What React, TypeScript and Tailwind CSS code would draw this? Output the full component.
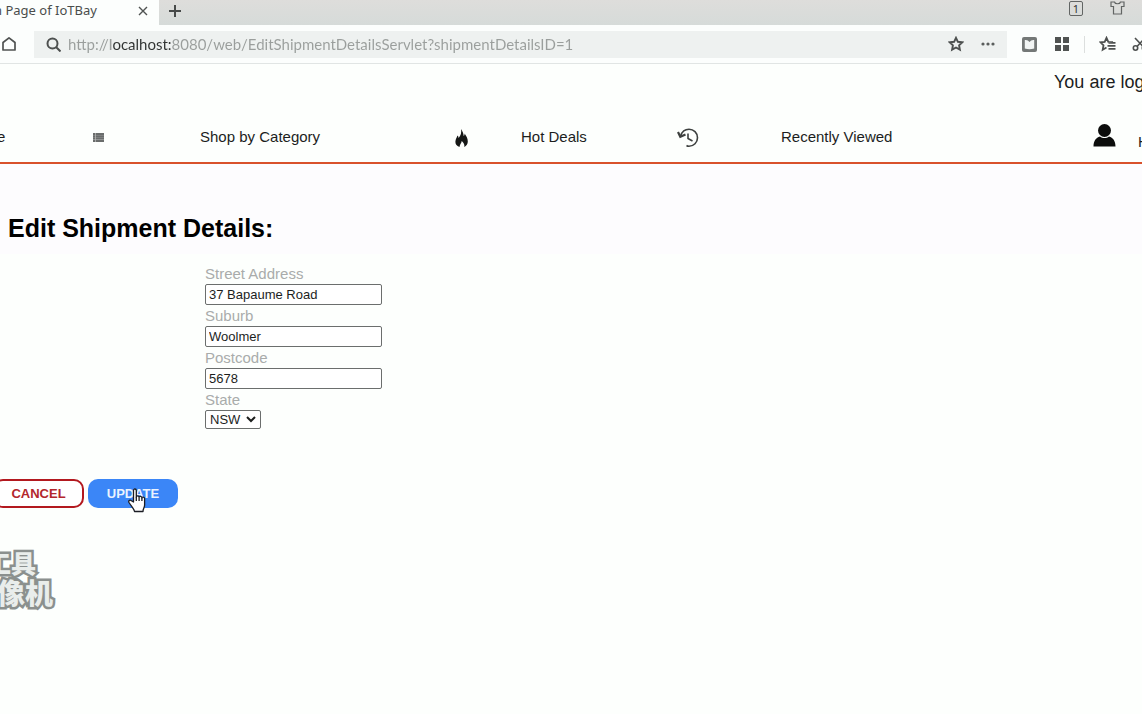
import { useState } from 'react'

const FIELDS = [
  { id: 'street', label: 'Street Address', value: '37 Bapaume Road' },
  { id: 'suburb', label: 'Suburb', value: 'Woolmer' },
  { id: 'postcode', label: 'Postcode', value: '5678' },
]

const STATES = ['NSW', 'VIC', 'QLD', 'SA', 'WA', 'TAS', 'NT', 'ACT']

function TabStrip() {
  return (
    <div className="flex h-[25px] bg-linear-to-b from-[#dedddb] to-[#d6dbd9]">
      <div className="flex w-[159px] items-center justify-between bg-[#fcfefd] pr-[11px] pb-[3px]">
        <span className="-ml-[6px] text-[13px] whitespace-nowrap text-[#4a4d4c]">n Page of IoTBay</span>
        <button type="button" aria-label="Close tab">
          <svg width="10" height="10" viewBox="0 0 10 10" stroke="#505352" strokeWidth="1.4">
            <path d="M1 1l8 8M9 1L1 9" />
          </svg>
        </button>
      </div>
      <button type="button" aria-label="New tab" className="px-[10px] pb-[4px]">
        <svg width="12" height="12" viewBox="0 0 12 12" stroke="#474a49" strokeWidth="2">
          <path d="M6 0v12M0 6h12" />
        </svg>
      </button>
      <div className="ml-auto flex items-start gap-[27px] pr-[17px]">
        <button
          type="button"
          className="mt-[1px] h-[15px] w-[14px] rounded-[2px] border border-[#626564] text-[11px] leading-[13px] text-[#333]"
        >
          1
        </button>
        <button type="button" aria-label="Skins" className="mt-[1px]">
          <svg width="15" height="14" viewBox="0 0 15 14" fill="none" stroke="#626564" strokeWidth="1.2">
            <path d="M4.500 1H1v4.500h2.500V13h8V5.500H14V1H10.500C10 3.300 5 3.300 4.500 1z" />
          </svg>
        </button>
      </div>
    </div>
  )
}

function AddressBar() {
  const [url, setUrl] = useState('http://localhost:8080/web/EditShipmentDetailsServlet?shipmentDetailsID=1')

  return (
    <div className="flex h-[39px] items-center border-b border-[#e1e5e4] bg-[#fcfefd]">
      <button type="button" aria-label="Home" className="ml-[1px] flex-none">
        <svg width="16" height="16" viewBox="0 0 16 16" fill="none" stroke="#505352" strokeWidth="1.7" strokeLinejoin="round">
          <path d="M8 1.800L14 6.500V14H2V6.500z" />
        </svg>
      </button>
      <div className="ml-[17px] flex h-[27px] min-w-0 flex-1 items-center bg-[#eef1f0] pr-[12px] pl-[12px]">
        <svg width="15" height="15" viewBox="0 0 15 15" fill="none" stroke="#4d504f" strokeWidth="2" className="flex-none">
          <circle cx="6.500" cy="6.500" r="5" />
          <path d="M10 10l4.500 4.500" />
        </svg>
        <input
          type="text"
          aria-label="Address"
          value={url}
          onChange={e => setUrl(e.target.value)}
          className="ml-[7px] min-w-0 flex-1 bg-[linear-gradient(90deg,#9a9e9c_43px,#303332_43px,#303332_104px,#9a9e9c_104px)] bg-clip-text font-['Lato',sans-serif] text-[15px] leading-[22px] text-transparent outline-none"
        />
        <button type="button" aria-label="Bookmark" className="flex-none">
          <svg width="16" height="16" viewBox="0 0 16 16" fill="none" stroke="#4d504f" strokeWidth="1.900">
            <path d="M8 1.800l1.900 4 4.400.5-3.200 3 .8 4.400L8 11.500l-3.900 2.200.8-4.400-3.200-3 4.400-.5z" />
          </svg>
        </button>
        <button type="button" aria-label="More" className="ml-[17px] flex-none">
          <svg width="14" height="4" viewBox="0 0 14 4" fill="#5a5d5c">
            <circle cx="2" cy="2" r="1.600" />
            <circle cx="7" cy="2" r="1.600" />
            <circle cx="12" cy="2" r="1.600" />
          </svg>
        </button>
      </div>
      <div className="flex w-[135px] flex-none items-center overflow-hidden">
        <button type="button" aria-label="Reader" className="ml-[15px] flex-none">
          <svg width="15" height="15" viewBox="0 0 15 15">
            <rect width="15" height="15" rx="2" fill="#747877" />
            <path d="M2.800 3Q5.800 2.500 7.500 5Q9.200 2.500 12.200 3v8.500q-4.700 1.500-9.400 0z" fill="#f2f5f4" />
          </svg>
        </button>
        <button type="button" aria-label="Apps" className="ml-[18px] flex-none">
          <svg width="14" height="14" viewBox="0 0 14 14" fill="#505352">
            <path d="M0 0h6v6H0zM8 0h6v6H8zM0 8h6v6H0zM8 8h6v6H8z" />
          </svg>
        </button>
        <span className="ml-[15px] h-[17px] w-px flex-none bg-[#dcdfde]" />
        <button type="button" aria-label="Favourites" className="ml-[14px] flex-none">
          <svg width="17" height="16" viewBox="0 0 17 16" fill="none" stroke="#4d504f" strokeWidth="1.800">
            <path d="M14 6.200L9.300 5.800 7.500 1.800l-1.800 4-4.200.5 3 3-.8 4.400L7.500 11.500M9.500 6.800h7M8.500 9.800h8M9.500 12.800h7" />
          </svg>
        </button>
        <button type="button" aria-label="Screenshot" className="ml-[16px] flex-none">
          <svg width="16" height="16" viewBox="0 0 16 16" fill="none" stroke="#4d504f" strokeWidth="1.600">
            <circle cx="3.500" cy="12" r="2.200" />
            <circle cx="12.500" cy="12" r="2.200" />
            <path d="M3 2l8 8.500M13 2l-8 8.500" />
          </svg>
        </button>
      </div>
    </div>
  )
}

function ShopNav() {
  return (
    <nav className="grid h-[52px] grid-cols-[93fr_107fr_255fr_66fr_156fr_104fr_312fr_45fr_minmax(0,4fr)] items-center overflow-hidden border-b-2 border-[#d9512c] text-[15px] whitespace-nowrap text-[#1c1e1d]">
      <a href="#home" className="-ml-[3px]">e</a>
      <svg width="11" height="9" viewBox="0 0 11 9" fill="#6a6d6c">
        <path d="M0 0h2.300v2H0zM3 0h8v2H3zM0 2.300h2.300v2H0zM3 2.300h8v2H3zM0 4.600h2.300v2H0zM3 4.600h8v2H3zM0 7h2.300v2H0zM3 7h8v2H3z" />
        <path d="M0 0h11v9H0z" opacity=".45" />
      </svg>
      <a href="#categories">Shop by Category</a>
      <svg width="13" height="18" viewBox="0 0 13 18" fill="#151716" className="mt-[2px]">
        <path d="M6 0c1.500 2.500 2.700 4.500 2.600 7C9.500 6.500 9.700 5.500 9.600 4.500c1.800 2.500 3.200 5 3.200 8 0 2.500-1.300 4.500-3.600 5.500.8-2.500-.7-4.500-2.500-6-.1 2-2 3.500-2.200 6C1.500 17 .2 15 .4 12.500c.2-2.500 1.500-4 2-6 .8.600 1.200 1.500 1.200 2.500C5.800 6.500 6.700 3.500 6 0z" />
      </svg>
      <a href="#deals">Hot Deals</a>
      <svg width="22" height="20" viewBox="0 0 22 20" fill="none" stroke="#3d403f" strokeWidth="1.600" className="mt-[2px]">
        <path d="M3.500 8C5 3.500 8 1.200 12 1.200a8.300 8.300 0 0 1 0 17Q10.500 18.200 9.500 17.500M11 5.500v5l4.500 2.500" />
        <path d="M1 4l2.300 4.800L8.500 6.500" strokeWidth="2.200" />
      </svg>
      <a href="#recent">Recently Viewed</a>
      <svg width="23" height="23" viewBox="0 0 23 23" fill="#0c0d0c" className="-mt-[4px]">
        <circle cx="11.500" cy="6.500" r="6.500" />
        <path d="M.5 22.500c0-5.500 2.500-9 6.500-10 2.500 2 6.500 2 9 0 4 1 6.500 4.500 6.500 10z" />
      </svg>
      <a href="#account" className="pt-[10px]">H</a>
    </nav>
  )
}

function HandCursor() {
  return (
    <svg
      width="18"
      height="25"
      viewBox="0 0 18 25"
      fill="#fff"
      stroke="#1b1d24"
      strokeWidth="1.300"
      strokeLinejoin="round"
      className="pointer-events-none absolute top-[9px] left-[40px]"
    >
      <path d="M5.500 14V2.500c0-2 2.800-2 2.800 0V9c0-1.500 2.800-1.500 2.800.3 0-1.500 2.800-1.300 2.800.6 0-1.300 2.700-1.200 2.700.7V17c0 2.500-1.600 3.500-1.600 6.500H6.500C6 20.500 3 18 1 14.500c-1-2 1.200-3 2.400-1.800z" />
      <path d="M8.300 9v4M11.100 9.500v3.500M13.900 10v3" />
    </svg>
  )
}

export default function App() {
  const [values, setValues] = useState<Record<string, string>>(
    Object.fromEntries(FIELDS.map(f => [f.id, f.value])),
  )

  return (
    <div className="min-h-screen overflow-hidden bg-[#fdfffd] font-['Liberation_Sans',Arial,sans-serif] text-black">
      <div className="font-['Noto_Sans','Open_Sans',sans-serif]">
        <TabStrip />
        <AddressBar />
      </div>

      <header>
        <p className="ml-auto h-[48px] w-[88px] pt-[6px] text-[18px] leading-[24px] whitespace-nowrap text-[#1c1e1d]">
          You are log
        </p>
        <ShopNav />
      </header>

      <main>
        <div className="bg-[#fdfcfe] px-2 pt-[49px] pb-[11px]">
          <h1 className="text-[25px] leading-[30px] font-bold">Edit Shipment Details:</h1>
        </div>

        <form onSubmit={e => e.preventDefault()}>
          <div className="ml-[205px] flex w-[177px] flex-col items-start pt-[9px] text-[15px] leading-[21px]">
            {FIELDS.map(f => (
              <div key={f.id} className="w-full">
                <label htmlFor={f.id} className="block text-[#a9acab]">{f.label}</label>
                <input
                  id={f.id}
                  type="text"
                  value={values[f.id]}
                  onChange={e => setValues({ ...values, [f.id]: e.target.value })}
                  className="block h-[21px] w-full rounded-[2px] border border-[#6b6e6d] bg-white px-[3px] text-[13px] text-[#1c1e1d]"
                />
              </div>
            ))}
            <label htmlFor="state" className="text-[#a9acab]">State</label>
            <div className="relative">
              <select
                id="state"
                defaultValue="NSW"
                className="block h-[19px] w-[56px] appearance-none rounded-[2px] border border-[#6b6e6d] bg-white pl-[4px] text-[13px] leading-[17px] text-[#1c1e1d]"
              >
                {STATES.map(s => (
                  <option key={s}>{s}</option>
                ))}
              </select>
              <svg
                width="10"
                height="7"
                viewBox="0 0 10 7"
                fill="none"
                stroke="#1c1e1d"
                strokeWidth="2"
                className="pointer-events-none absolute top-[6px] right-[5px]"
              >
                <path d="M1 1l4 4 4-4" />
              </svg>
            </div>
          </div>

          <div className="mt-[50px] -ml-[7px] flex gap-1 text-[13px] font-bold">
            <button type="button" className="h-[29px] w-[91px] rounded-[10px] border-2 border-[#b3191f] bg-white text-[#b3262c]">
              CANCEL
            </button>
            <button type="submit" className="relative h-[29px] w-[90px] rounded-[10px] bg-[#3b86f7] text-[#eaf3ff]">
              UPDATE
              <HandCursor />
            </button>
          </div>
        </form>

        <div className="mt-[39px] -ml-[14px] font-['Noto_Sans_CJK_SC',sans-serif] font-black text-[#e9edeb] [-webkit-text-stroke:5px_#8b908e] [paint-order:stroke_fill]">
          <p className="text-[25px] leading-[30px]">工具</p>
          <p className="ml-[11px] text-[28px] leading-[30px]">像机</p>
        </div>
      </main>
    </div>
  )
}
